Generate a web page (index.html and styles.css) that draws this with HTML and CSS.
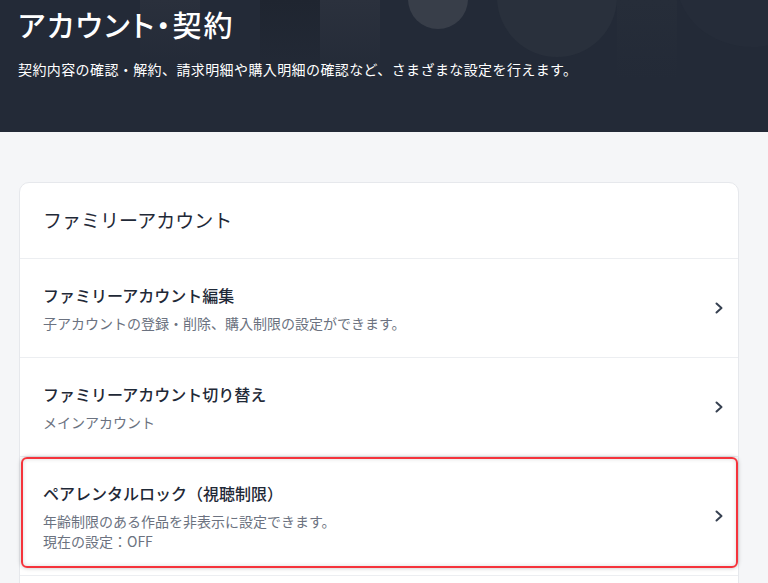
FILE: index.html
```html
<!DOCTYPE html>
<html lang="ja">
<head>
<meta charset="utf-8">
<title>アカウント・契約</title>
<link rel="stylesheet" href="styles.css">
</head>
<body>
<header class="hero">
  <div class="deco deco-rect1"></div>
  <div class="deco deco-rect2"></div>
  <div class="deco deco-rect3"></div>
  <div class="deco deco-rect4"></div>
  <div class="deco deco-circle1"></div>
  <div class="deco deco-circle2"></div>
  <div class="deco deco-circle3"></div>
  <h1 class="hero-title">アカウント・契約</h1>
  <p class="hero-sub">契約内容の確認・解約、請求明細や購入明細の確認など、さまざまな設定を行えます。</p>
</header>
<main class="content">
  <section class="card">
    <h2 class="card-title">ファミリーアカウント</h2>
    <a class="row">
      <div class="row-text">
        <div class="row-title">ファミリーアカウント編集</div>
        <div class="row-desc">子アカウントの登録・削除、購入制限の設定ができます。</div>
      </div>
      <svg class="chev" width="10" height="14" viewBox="0 0 10 14"><path d="M2.5 2.5l5 4.5-5 4.5" fill="none" stroke="#374151" stroke-width="2" stroke-linecap="round" stroke-linejoin="round"/></svg>
    </a>
    <a class="row">
      <div class="row-text">
        <div class="row-title">ファミリーアカウント切り替え</div>
        <div class="row-desc">メインアカウント</div>
      </div>
      <svg class="chev" width="10" height="14" viewBox="0 0 10 14"><path d="M2.5 2.5l5 4.5-5 4.5" fill="none" stroke="#374151" stroke-width="2" stroke-linecap="round" stroke-linejoin="round"/></svg>
    </a>
    <a class="row row-highlight">
      <div class="row-text">
        <div class="row-title">ペアレンタルロック（視聴制限）</div>
        <div class="row-desc">年齢制限のある作品を非表示に設定できます。<br>現在の設定：OFF</div>
      </div>
      <svg class="chev" width="10" height="14" viewBox="0 0 10 14"><path d="M2.5 2.5l5 4.5-5 4.5" fill="none" stroke="#374151" stroke-width="2" stroke-linecap="round" stroke-linejoin="round"/></svg>
    </a>
    <a class="row row-empty"></a>
  </section>
</main>
</body>
</html>
```
FILE: styles.css
```css
html, body {
  margin: 0;
  padding: 0;
}
body {
  background: #f5f6f8;
  font-family: "Noto Sans CJK JP", "Noto Sans", sans-serif;
  color: #1f2937;
  overflow: hidden;
}
.hero {
  position: relative;
  height: 132px;
  background: #232a37;
  padding: 0 18px;
  box-sizing: border-box;
  overflow: hidden;
}
.deco {
  position: absolute;
  pointer-events: none;
}
.deco-rect1 {
  left: 140px; top: 0; width: 60px; height: 70px;
  background: linear-gradient(#2a303c, rgba(42,48,60,0));
}
.deco-rect2 {
  left: 260px; top: 0; width: 60px; height: 80px;
  background: linear-gradient(#1f2530, rgba(31,37,48,0));
}
.deco-rect3 {
  left: 320px; top: 0; width: 60px; height: 80px;
  background: linear-gradient(#2b313d, rgba(43,49,61,0));
}
.deco-rect4 {
  left: 617px; top: 0; width: 60px; height: 80px;
  background: linear-gradient(#262d39, rgba(38,45,57,0));
}
.deco-circle1 {
  left: 408px; top: -31px; width: 60px; height: 60px;
  border-radius: 50%;
  background: #383e49;
}
.deco-circle2 {
  left: 497px; top: -63px; width: 120px; height: 120px;
  border-radius: 50%;
  background: #29303c;
}
.deco-circle3 {
  left: 677px; top: -83px; width: 150px; height: 130px;
  border-radius: 50%;
  background: #252c39;
}
.hero-title {
  position: relative;
  margin: 0;
  padding-top: 4px;
  font-size: 29px;
  line-height: 40px;
  font-weight: 500;
  color: #ffffff;
  font-feature-settings: "palt";
  letter-spacing: 2px;
}
.hero-sub {
  position: relative;
  margin: 15px 0 0;
  font-size: 14px;
  line-height: 20px;
  color: #ffffff;
  letter-spacing: 0.4px;
}
.content {
  padding: 50px 0 0 19px;
}
.card {
  width: 720px;
  background: #ffffff;
  border: 1px solid #e6e8ec;
  border-radius: 10px;
  box-sizing: border-box;
}
.card-title {
  margin: 0;
  padding: 23px 23px 24px;
  font-size: 19px;
  line-height: 28px;
  font-weight: 400;
  color: #1f2937;
  border-bottom: 1px solid #eceef1;
}
.row {
  position: relative;
  display: flex;
  align-items: center;
  padding: 24px 14px 24px 23px;
  border-bottom: 1px solid #eceef1;
}
.row-text {
  flex: 1;
}
.row-title {
  font-size: 16px;
  line-height: 24px;
  font-weight: 500;
  color: #1f2937;
  margin-bottom: 6px;
}
.row-desc {
  font-size: 14px;
  line-height: 20px;
  color: #6b7280;
}
.chev {
  flex: none;
  display: block;
}
.row-highlight::after {
  content: "";
  position: absolute;
  left: 1px;
  right: 0;
  top: 0;
  bottom: 7px;
  border: 2px solid #f5333b;
  border-radius: 6px;
  box-shadow: 0 0 4px rgba(0,0,0,0.25), inset 0 0 4px rgba(0,0,0,0.15);
}
.row-empty {
  height: 60px;
  border-bottom: none;
}
```
